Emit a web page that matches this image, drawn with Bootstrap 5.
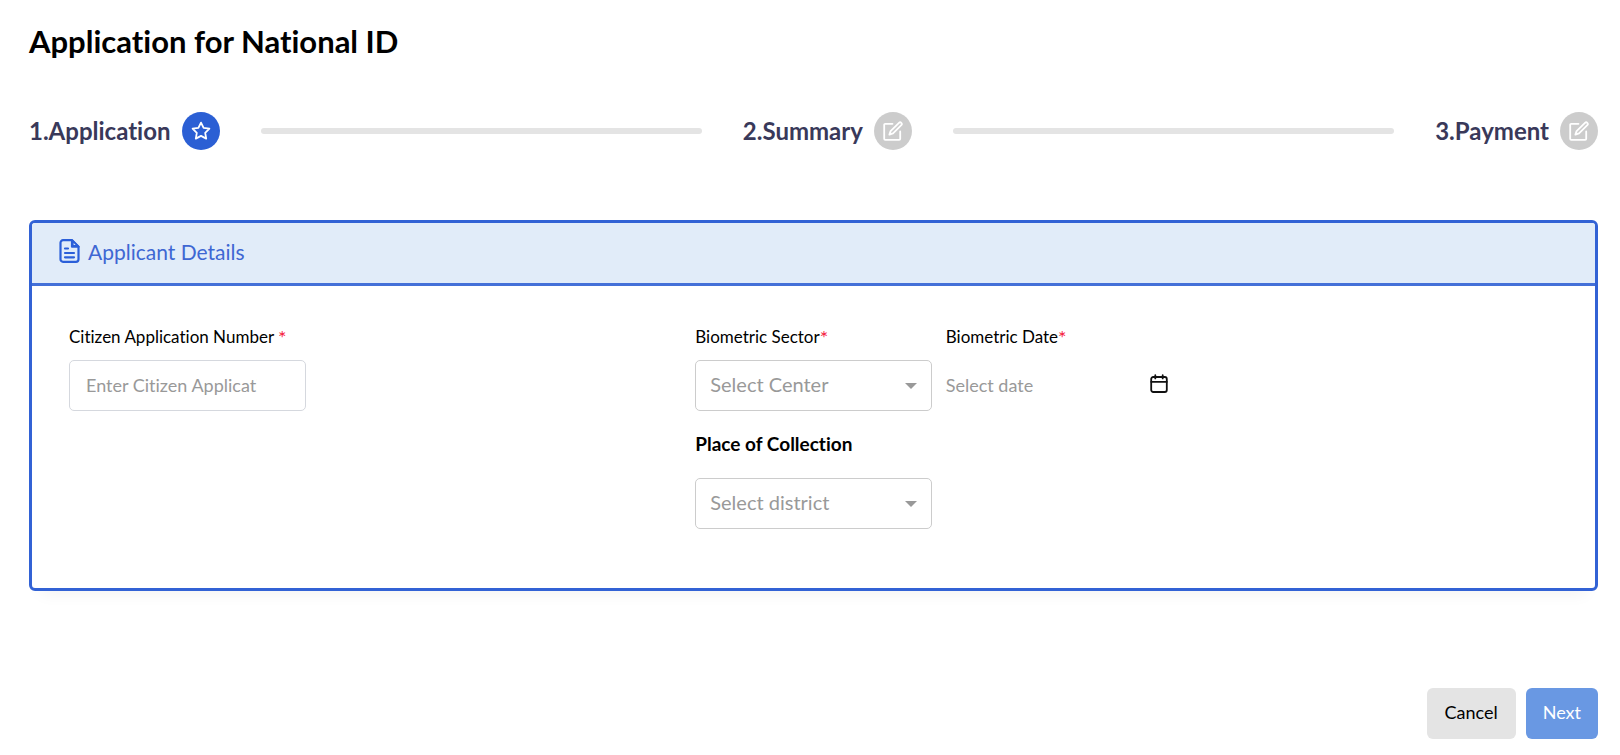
<!DOCTYPE html>
<html lang="en">
<head>
<meta charset="utf-8">
<meta name="viewport" content="width=device-width, initial-scale=1">
<title>Application for National ID</title>
<link href="https://cdn.jsdelivr.net/npm/bootstrap@5.3.0/dist/css/bootstrap.min.css" rel="stylesheet">
<style>
  body { font-family: Lato, "Open Sans", sans-serif; font-size: 17px; line-height: 24px; font-variant-ligatures: none; color: #000; background: #fff; }
  input, select, button { font-variant-ligatures: none; }
  .page { padding: 21px 22px 16px 29px; }
  .page-title { font-size: 31px; line-height: 40px; font-weight: 700; }
  .steps { gap: 41px; margin-top: 51px; }
  .step { gap: 11px; font-size: 24px; line-height: 32px; font-weight: 700; color: #39395a; }
  .step-icon { width: 38px; height: 38px; background: #ccc; color: #fff; }
  .step.active .step-icon { background: #2b5fd4; }
  .step-line { height: 6px; background: #e4e4e4; }
  .panel { margin-top: 70px; border: 3px solid #3262d5; border-radius: 6px; box-shadow: 0 14px 16px -12px rgba(0, 0, 0, .06); }
  .panel-head { height: 63px; padding: 0 27px 2px; gap: 8px; background: #e1ecf9; border-bottom: 3px solid #4470d8; border-radius: 3px 3px 0 0; color: #3e67d3; }
  .panel-head h2 { font-size: 21px; line-height: 24px; font-weight: 400; }
  .panel-head svg { margin-bottom: 2px; }
  .panel-body { padding: 39px 30px 59px; }
  .panel-body .row { --bs-gutter-x: 14px; margin: 0; }
  .field-label { display: block; margin-bottom: 11px; }
  .req { color: #f5203f; font-size: 20px; line-height: 20px; vertical-align: -2px; }
  .form-control, .form-select { height: 51px; border-radius: 5px; font-size: 18px; line-height: 24px; }
  .form-control { padding: 0 48px 2px 16px; border-color: #d5d8de; }
  .form-control::placeholder { color: #999; opacity: 1; }
  .form-select { padding: 0 40px 3px 14px; font-size: 20px; color: #999; border-color: #ccc;
    background-image: url("data:image/svg+xml,%3Csvg xmlns='http://www.w3.org/2000/svg' viewBox='0 0 12 6'%3E%3Cpath d='M0 0h12L6 6z' fill='%23999'/%3E%3C/svg%3E");
    background-size: 12px 6px; background-position: right 14px center; }
  .date-field .form-control { padding: 0 0 2px; border: 0; }
  .date-field button { padding: 0 14px 4px 8px; color: #111; }
  .place-title { font-size: 19px; line-height: 24px; font-weight: 700; margin: 21px 0 22px; }
  .actions { gap: 10px; margin-top: 97px; }
  .actions .btn { height: 51px; padding: 0 18px 2px; border: 0; border-radius: 6px; font-size: 18px; }
  .btn-cancel, .btn-cancel:hover { background: #e4e4e4; color: #000; }
  .actions .btn-next { padding: 0 17px 2px; }
  .btn-next, .btn-next:hover { background: #6998e3; color: #fff; }
</style>
</head>
<body>
<main class="page">
  <h1 class="page-title m-0">Application for National ID</h1>

  <div class="steps d-flex align-items-center">
    <div class="step active d-flex align-items-center">
      <span>1.Application</span>
      <span class="step-icon rounded-circle d-flex align-items-center justify-content-center">
        <svg width="20" height="20" viewBox="0 0 20 20" fill="none" stroke="currentColor" stroke-width="1.8" stroke-linejoin="round"><path d="M10 1.600l2.600 5.300 5.800.8-4.200 4.100 1 5.800L10 14.900l-5.200 2.700 1-5.800L1.600 7.700l5.800-.8z"/></svg>
      </span>
    </div>
    <div class="step-line flex-fill rounded-pill"></div>
    <div class="step d-flex align-items-center">
      <span>2.Summary</span>
      <span class="step-icon rounded-circle d-flex align-items-center justify-content-center">
        <svg width="20" height="20" viewBox="0 0 20 20" fill="none" stroke="currentColor" stroke-width="1.8" stroke-linecap="round" stroke-linejoin="round"><path d="M9.500 2.800H2.200a1 1 0 0 0-1 1v14a1 1 0 0 0 1 1h14a1 1 0 0 0 1-1v-7.300"/><path d="M16 1.800a1.600 1.600 0 0 1 2.300 2.300L10 12.400l-3.600 1.200 1.200-3.500z"/></svg>
      </span>
    </div>
    <div class="step-line flex-fill rounded-pill"></div>
    <div class="step d-flex align-items-center">
      <span>3.Payment</span>
      <span class="step-icon rounded-circle d-flex align-items-center justify-content-center">
        <svg width="20" height="20" viewBox="0 0 20 20" fill="none" stroke="currentColor" stroke-width="1.8" stroke-linecap="round" stroke-linejoin="round"><path d="M9.500 2.800H2.200a1 1 0 0 0-1 1v14a1 1 0 0 0 1 1h14a1 1 0 0 0 1-1v-7.300"/><path d="M16 1.800a1.600 1.600 0 0 1 2.300 2.300L10 12.400l-3.600 1.200 1.200-3.500z"/></svg>
      </span>
    </div>
  </div>

  <form>
    <section class="panel">
      <div class="panel-head d-flex align-items-center">
        <svg width="21" height="24" viewBox="0 0 21 24" fill="none" stroke="#2b5fd9" stroke-width="2.200" stroke-linecap="round" stroke-linejoin="round"><path d="M13 1.200H4a2.500 2.500 0 0 0-2.500 2.500v16.600A2.500 2.500 0 0 0 4 22.800h13a2.500 2.500 0 0 0 2.500-2.500V7.700z"/><path d="M13 1.200v6.500h6.500z" fill="#2b5fd9"/><path d="M14.600 4v2h2z" fill="#e1ecf9" stroke="none"/><path d="M6 9.500h3M6 14h9M6 18.300h9"/></svg>
        <h2 class="m-0">Applicant Details</h2>
      </div>
      <div class="panel-body">
        <div class="row">
          <div class="col-2">
            <label class="field-label" for="citizen">Citizen Application Number <span class="req">*</span></label>
            <input class="form-control" id="citizen" type="text" placeholder="Enter Citizen Application Number">
          </div>
          <div class="col-2 offset-3">
            <label class="field-label" for="sector">Biometric Sector<span class="req">*</span></label>
            <select class="form-select" id="sector"><option>Select Center</option></select>
            <h3 class="place-title" id="place">Place of Collection</h3>
            <select class="form-select" aria-labelledby="place"><option>Select district</option></select>
          </div>
          <div class="col-2">
            <label class="field-label" for="date">Biometric Date<span class="req">*</span></label>
            <div class="date-field d-flex align-items-center">
              <input class="form-control" id="date" type="text" placeholder="Select date">
              <button type="button" class="btn border-0 d-flex" aria-label="Open calendar">
                <svg width="18" height="20" viewBox="0 0 18 20" fill="none" stroke="currentColor" stroke-width="1.800" stroke-linecap="round"><rect x="1.200" y="3" width="15.600" height="15" rx="2"/><path d="M1.200 7.800h15.600M5.300 1.200v3.200M12.700 1.200v3.200"/></svg>
              </button>
            </div>
          </div>
        </div>
      </div>
    </section>

    <div class="actions d-flex justify-content-end">
      <button type="button" class="btn btn-cancel">Cancel</button>
      <button type="submit" class="btn btn-next">Next</button>
    </div>
  </form>
</main>
<script src="https://cdn.jsdelivr.net/npm/bootstrap@5.3.0/dist/js/bootstrap.bundle.min.js"></script>
</body>
</html>
